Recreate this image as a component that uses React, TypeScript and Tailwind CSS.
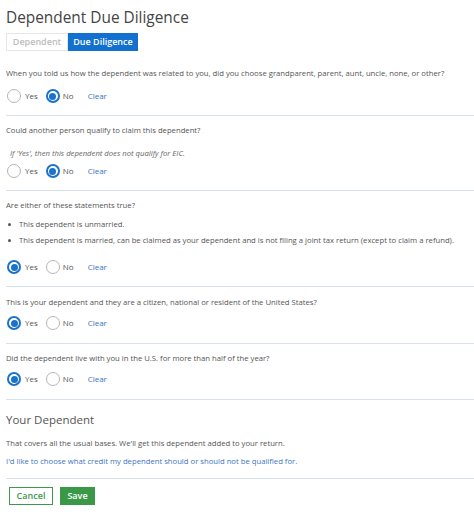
import React from "react";

const font = { fontFamily: '"Open Sans", "Noto Sans", sans-serif' };

function Radio({ checked }: { checked: boolean }) {
  return checked ? (
    <span className="flex h-[14px] w-[14px] shrink-0 items-center justify-center rounded-full border-[2px] border-[#1a72c9] bg-white">
      <span className="h-[7px] w-[7px] rounded-full bg-[#1a72c9]" />
    </span>
  ) : (
    <span className="block h-[14px] w-[14px] shrink-0 rounded-full border border-[#b5b5b5] bg-white" />
  );
}

function RadioRow({ yes, className = "" }: { yes: boolean; className?: string }) {
  return (
    <div className={`flex h-[14px] items-center pl-[1px] text-[8px] text-[#555] ${className}`}>
      <Radio checked={yes} />
      <span className="ml-[4px]">Yes</span>
      <span className="ml-[8px] flex">
        <Radio checked={!yes} />
      </span>
      <span className="ml-[3px]">No</span>
      <span className="ml-[14px] text-[#3b75bf]">Clear</span>
    </div>
  );
}

export default function App() {
  return (
    <div className="w-[474px] h-[514px] bg-white pl-[6px]" style={font}>
      <h1 className="pt-[8px] text-[15.4px] leading-[20px] text-[#444]">Dependent Due Diligence</h1>
      <div className="mt-[5px] flex h-[18px] text-[9px] font-semibold">
        <div className="flex w-[62px] items-center justify-center border border-[#e6e6e6] text-[#bdbdbd]">Dependent</div>
        <div className="flex w-[70px] items-center justify-center bg-[#1170d0] text-white">Due Diligence</div>
      </div>

      <p className="mt-[14px] text-[7.7px] leading-[16px] text-[#555]">
        When you told us how the dependent was related to you, did you choose grandparent, parent, aunt, uncle, none, or other?
      </p>
      <RadioRow yes={false} className="mt-[8px]" />
      <div className="mt-[12px] border-t border-[#d6e1ec]" />

      <p className="pt-[6px] text-[7.7px] leading-[16px] text-[#555]">Could another person qualify to claim this dependent?</p>
      <p className="mt-[7px] pl-[4px] text-[7.7px] italic leading-[16px] text-[#666]">
        If 'Yes', then this dependent does not qualify for EIC.
      </p>
      <RadioRow yes={false} className="mt-[3px]" />
      <div className="mt-[12px] border-t border-[#d6e1ec]" />

      <p className="pt-[6px] text-[7.7px] leading-[16px] text-[#555]">Are either of these statements true?</p>
      <ul className="mt-[3px] text-[7.7px] leading-[16px] text-[#555]">
        <li className="flex items-center">
          <span className="ml-[2px] mr-[8px] h-[3px] w-[3px] rounded-full bg-[#555]" />
          This dependent is unmarried.
        </li>
        <li className="flex items-center">
          <span className="ml-[2px] mr-[8px] h-[3px] w-[3px] rounded-full bg-[#555]" />
          This dependent is married, can be claimed as your dependent and is not filing a joint tax return (except to claim a refund).
        </li>
      </ul>
      <RadioRow yes={true} className="mt-[12px]" />
      <div className="mt-[12px] border-t border-[#d6e1ec]" />

      <p className="pt-[7px] text-[7.7px] leading-[16px] text-[#555]">
        This is your dependent and they are a citizen, national or resident of the United States?
      </p>
      <RadioRow yes={true} className="mt-[6px]" />
      <div className="mt-[13px] border-t border-[#d6e1ec]" />

      <p className="pt-[6px] text-[7.7px] leading-[16px] text-[#555]">
        Did the dependent live with you in the U.S. for more than half of the year?
      </p>
      <RadioRow yes={true} className="mt-[6px]" />
      <div className="mt-[13px] border-t border-[#d6e1ec]" />

      <h2 className="pt-[12px] text-[11.5px] leading-[16px] text-[#555]">Your Dependent</h2>
      <p className="mt-[7px] text-[7.7px] leading-[16px] text-[#555]">
        That covers all the usual bases. We'll get this dependent added to your return.
      </p>
      <p className="mt-[2px] text-[7.7px] leading-[16px] text-[#3b75bf]">
        I'd like to choose what credit my dependent should or should not be qualified for.
      </p>
      <div className="mt-[9px] border-t border-[#d6e1ec]" />

      <div className="flex gap-[7px] pl-[3px] pt-[8px]">
        <button className="flex h-[18px] w-[44px] items-center justify-center border border-[#3d9a4b] bg-white text-[9px] font-semibold text-[#3d9a4b]">
          Cancel
        </button>
        <button className="flex h-[18px] w-[35px] items-center justify-center bg-[#3a9947] text-[9px] font-semibold text-white">
          Save
        </button>
      </div>
    </div>
  );
}
